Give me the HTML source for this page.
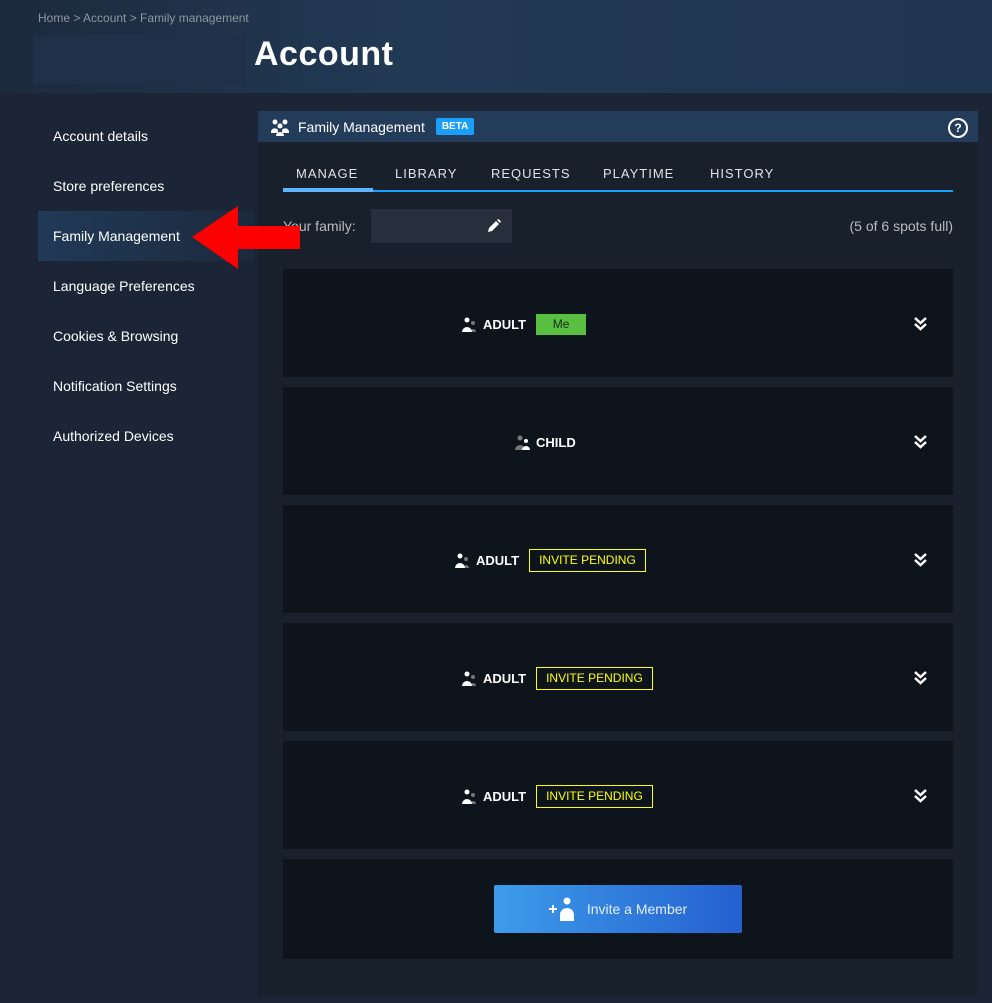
<!DOCTYPE html>
<html><head><style>
*{margin:0;padding:0;box-sizing:border-box}
body{width:992px;height:1003px;background:#1b2535;font-family:"Liberation Sans",sans-serif;position:relative;overflow:hidden;color:#fff}
.top{position:absolute;left:0;top:0;width:992px;height:93px;background:linear-gradient(90deg,#1c2a3d 0%,#223954 40%,#1f3550 100%)}
.crumb{position:absolute;left:38px;top:11px;font-size:12px;color:#8f98a0}
.blank{position:absolute;left:33px;top:35px;width:213px;height:49px;background:#1f3049}
h1{position:absolute;left:254px;top:35px;font-size:34px;font-weight:bold;color:#fff;letter-spacing:.5px}
.nav{position:absolute;left:38px;font-size:14px;color:#fff;width:215px;height:50px;line-height:50px;padding-left:15px}
.nav.act{background:linear-gradient(90deg,#213a57,#1c2a3d)}
.panel{position:absolute;left:258px;top:111px;width:720px;height:884px;background:#18202c}
.ph{height:31px;background:#233c5a;display:flex;align-items:center;padding-left:12px;font-size:14px}
.beta{background:#1a9fff;color:#fff;font-size:10px;font-weight:bold;padding:3px 6px;border-radius:2px;margin-left:11px}
.help{position:absolute;right:10px;top:7px;width:20px;height:20px;border:2px solid #fff;border-radius:50%;font-size:12px;font-weight:bold;text-align:center;line-height:16px}
.tabs{position:absolute;left:25px;top:45px;width:670px;height:36px;border-bottom:2px solid #1a9fff}
.tab{position:absolute;top:10px;font-size:13px;letter-spacing:1px;color:#dfe3e6}
.ul{position:absolute;left:0;bottom:-2px;width:90px;height:4px;background:#61b6ff}
.fam{position:absolute;left:25px;top:107px;font-size:14px;color:#b8bcbf}
.inp{position:absolute;left:113px;top:98px;width:141px;height:34px;background:#262f3b}
.spots{position:absolute;right:25px;top:107px;font-size:14px;color:#b8bcbf}
.card{position:absolute;left:25px;width:670px;height:108px;background:#0e141c}
.lbl{position:absolute;top:46px;display:flex;align-items:center;font-size:13px;font-weight:bold;height:18px}
.me{background:#59bf40;color:#1a2a14;font-weight:normal;font-size:12px;width:50px;height:21px;line-height:21px;text-align:center;margin-left:10px}
.pend{border:1px solid #ffff00;color:#ffff00;font-weight:normal;font-size:12px;padding:0 9px;height:23px;line-height:21px;margin-left:10px}
.chev{position:absolute;right:26px;top:48px}
.btn{position:absolute;left:211px;top:26px;width:248px;height:48px;border-radius:2px;background:linear-gradient(90deg,#3d9ce9,#2560d0);display:flex;align-items:center;justify-content:center;font-size:14px;color:#e3eefa}
.arrow{position:absolute;left:190px;top:205px;z-index:5}
</style></head><body>
<div class="top"></div>
<div class="crumb">Home &gt; Account &gt; Family management</div>
<div class="blank"></div>
<h1>Account</h1>
<div class="nav" style="top:111px">Account details</div>
<div class="nav" style="top:161px">Store preferences</div>
<div class="nav act" style="top:211px">Family Management</div>
<div class="nav" style="top:261px">Language Preferences</div>
<div class="nav" style="top:311px">Cookies &amp; Browsing</div>
<div class="nav" style="top:361px">Notification Settings</div>
<div class="nav" style="top:411px">Authorized Devices</div>
<div class="panel">
 <div class="ph"><svg width="20" height="18" viewBox="0 0 20 18" fill="#fff"><circle cx="5" cy="4" r="2.5"/><circle cx="15" cy="4" r="2.5"/><circle cx="10" cy="8" r="2.5"/><path d="M1 13a4 4 0 0 1 7-1v3H1z M12 12a4 4 0 0 1 7 1v2h-7z M6 18a4 4 0 0 1 8 0z"/></svg><span style="margin-left:8px">Family Management</span><span class="beta">BETA</span></div>
 <div class="help">?</div>
 <div class="tabs">
  <div class="tab" style="left:13px">MANAGE</div>
  <div class="tab" style="left:112px">LIBRARY</div>
  <div class="tab" style="left:208px">REQUESTS</div>
  <div class="tab" style="left:320px">PLAYTIME</div>
  <div class="tab" style="left:427px">HISTORY</div>
  <div class="ul"></div>
 </div>
 <div class="fam">Your family:</div>
 <div class="inp"><svg style="position:absolute;right:11px;top:10px" width="14" height="14" viewBox="0 0 14 14" fill="#fff"><path d="M1 13l1-4 7-7 3 3-7 7z M10 1l1.5-1 2.5 2.5-1 1.5z"/></svg></div>
 <div class="spots">(5 of 6 spots full)</div>

 <div class="card" style="top:158px"><div class="lbl" style="left:179px"><svg width="16" height="15" viewBox="0 0 16 15"><circle cx="5" cy="3" r="2.5" fill="#fff"/><circle cx="11" cy="6" r="2" fill="#777"/><path d="M8 15H14a3 3 0 0 0-6 0z" fill="#777"/><path d="M0 15a5 5 0 0 1 10 0z" fill="#fff"/></svg><span style="margin-left:5px">ADULT</span><span class="me">Me</span></div><div class="chev"><svg width="13" height="14" viewBox="0 0 13 14" fill="none" stroke="#fff" stroke-width="2.5"><path d="M1 1l5.5 5 5.5-5M1 7l5.5 5 5.5-5"/></svg></div></div>
 <div class="card" style="top:276px"><div class="lbl" style="left:232px"><svg width="16" height="15" viewBox="0 0 16 15"><circle cx="5" cy="3" r="2.5" fill="#777"/><circle cx="11" cy="6" r="2" fill="#fff"/><path d="M0 15a5 5 0 0 1 10 0z" fill="#777"/><path d="M7 15H15a4 4 0 0 0-8 0z" fill="#fff"/></svg><span style="margin-left:5px">CHILD</span></div><div class="chev"><svg width="13" height="14" viewBox="0 0 13 14" fill="none" stroke="#fff" stroke-width="2.5"><path d="M1 1l5.5 5 5.5-5M1 7l5.5 5 5.5-5"/></svg></div></div>
 <div class="card" style="top:394px"><div class="lbl" style="left:172px"><svg width="16" height="15" viewBox="0 0 16 15"><circle cx="5" cy="3" r="2.5" fill="#fff"/><circle cx="11" cy="6" r="2" fill="#777"/><path d="M8 15H14a3 3 0 0 0-6 0z" fill="#777"/><path d="M0 15a5 5 0 0 1 10 0z" fill="#fff"/></svg><span style="margin-left:5px">ADULT</span><span class="pend">INVITE PENDING</span></div><div class="chev"><svg width="13" height="14" viewBox="0 0 13 14" fill="none" stroke="#fff" stroke-width="2.5"><path d="M1 1l5.5 5 5.5-5M1 7l5.5 5 5.5-5"/></svg></div></div>
 <div class="card" style="top:512px"><div class="lbl" style="left:179px"><svg width="16" height="15" viewBox="0 0 16 15"><circle cx="5" cy="3" r="2.5" fill="#fff"/><circle cx="11" cy="6" r="2" fill="#777"/><path d="M8 15H14a3 3 0 0 0-6 0z" fill="#777"/><path d="M0 15a5 5 0 0 1 10 0z" fill="#fff"/></svg><span style="margin-left:5px">ADULT</span><span class="pend">INVITE PENDING</span></div><div class="chev"><svg width="13" height="14" viewBox="0 0 13 14" fill="none" stroke="#fff" stroke-width="2.5"><path d="M1 1l5.5 5 5.5-5M1 7l5.5 5 5.5-5"/></svg></div></div>
 <div class="card" style="top:630px"><div class="lbl" style="left:179px"><svg width="16" height="15" viewBox="0 0 16 15"><circle cx="5" cy="3" r="2.5" fill="#fff"/><circle cx="11" cy="6" r="2" fill="#777"/><path d="M8 15H14a3 3 0 0 0-6 0z" fill="#777"/><path d="M0 15a5 5 0 0 1 10 0z" fill="#fff"/></svg><span style="margin-left:5px">ADULT</span><span class="pend">INVITE PENDING</span></div><div class="chev"><svg width="13" height="14" viewBox="0 0 13 14" fill="none" stroke="#fff" stroke-width="2.5"><path d="M1 1l5.5 5 5.5-5M1 7l5.5 5 5.5-5"/></svg></div></div>
 <div class="card" style="top:748px;height:100px"><div class="btn"><svg width="26" height="24" viewBox="0 0 26 24" fill="#fff"><path d="M0 12h8M4 8v8" stroke="#fff" stroke-width="2"/><circle cx="18" cy="4" r="3.5"/><path d="M11 24v-6a7 7 0 0 1 14 0v6z"/></svg><span style="margin-left:12px">Invite a Member</span></div></div>
</div>
<svg class="arrow" width="112" height="66"><polygon points="2,32 48,1 48,21 110,21 110,44 48,44 48,64" fill="#f00"/></svg>
</body></html>
